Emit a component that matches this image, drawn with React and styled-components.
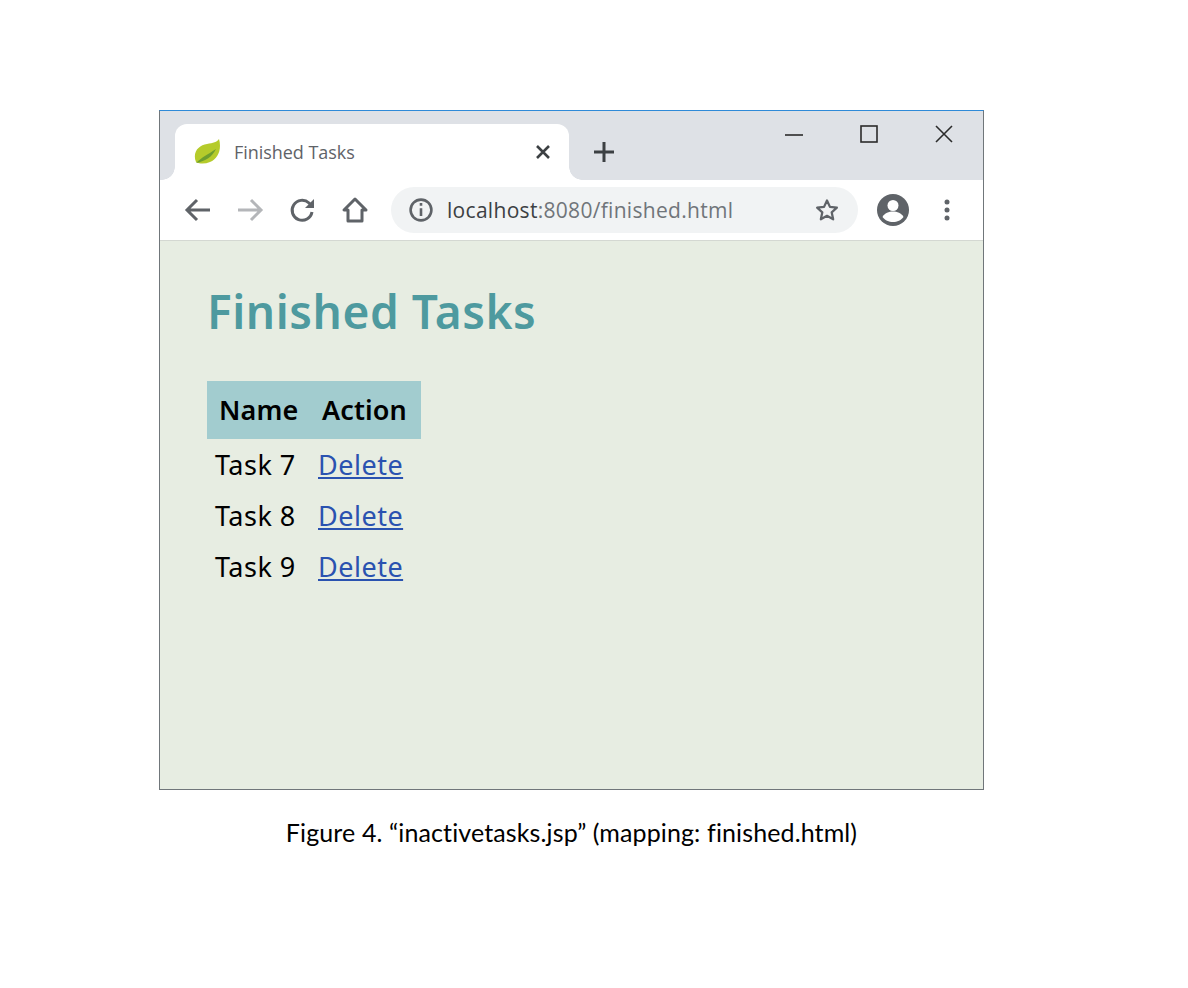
import styled, { createGlobalStyle } from "styled-components";

const tasks = ["Task 7", "Task 8", "Task 9"];

const Global = createGlobalStyle`
  html, body {
    margin: 0;
    padding: 0;
    background: #fff;
  }
`;

const Page = styled.div`
  width: 1188px;
  height: 988px;
  padding: 110px 0 0 159px;
  box-sizing: border-box;
  overflow: hidden;
`;

const Win = styled.div`
  width: 825px;
  height: 680px;
  box-sizing: border-box;
  display: flex;
  flex-direction: column;
  border: 1px solid #70767a;
  border-top-color: #2f8ad8;
  background: #fff;
`;

const TabStrip = styled.div`
  height: 69px;
  flex: none;
  display: flex;
  background: #dee1e6;
  padding: 13px 0 0 15px;
  box-sizing: border-box;
`;

const Tab = styled.div`
  position: relative;
  width: 394px;
  height: 56px;
  display: flex;
  align-items: center;
  background: #fff;
  border-radius: 12px 12px 0 0;
  padding: 0 18px 0 18px;
  box-sizing: border-box;
  &::before,
  &::after {
    content: "";
    position: absolute;
    bottom: 0;
    width: 13px;
    height: 13px;
  }
  &::before {
    left: -13px;
    background: radial-gradient(circle at 0 0, #dee1e6 12.5px, #fff 13px);
  }
  &::after {
    right: -13px;
    background: radial-gradient(circle at 100% 0, #dee1e6 12.5px, #fff 13px);
  }
`;

const TabTitle = styled.span`
  flex: 1;
  margin-left: 13px;
  font: 18px "Open Sans", sans-serif;
  letter-spacing: -0.05px;
  color: #5f6368;
`;

const NewTab = styled.div`
  margin: 16px 0 0 23px;
  width: 24px;
  height: 24px;
`;

const WinControls = styled.div`
  margin-left: auto;
  display: flex;
  align-items: flex-start;
  gap: 55px;
  padding: 0 29px 0 0;
`;

const Toolbar = styled.div`
  height: 61px;
  flex: none;
  display: flex;
  align-items: center;
  border-bottom: 1px solid #d4d8d2;
  box-sizing: border-box;
  padding: 0 24px 1px 23px;
`;

const NavIcon = styled.div`
  width: 30px;
  height: 30px;
  flex: none;
  margin-right: ${(p) => p.$gap || 22}px;
  display: flex;
`;

const Omni = styled.div`
  width: 467px;
  height: 46px;
  flex: none;
  border-radius: 23px;
  background: #f1f3f4;
  display: flex;
  align-items: center;
  padding: 0 18px 0 17px;
  box-sizing: border-box;
  margin-left: -7px;
`;

const Url = styled.div`
  flex: 1;
  margin-left: 13px;
  font: 21px "Open Sans", sans-serif;
  letter-spacing: 0.3px;
  color: #70757a;
  span {
    color: #3c4043;
  }
`;

const TailIcons = styled.div`
  display: flex;
  align-items: center;
  margin-left: 18px;
  gap: 34px;
`;

const Content = styled.div`
  flex: 1;
  background: #e7ede2;
  padding: 41px 0 0 47px;
  box-sizing: border-box;
`;

const Title = styled.h1`
  margin: 0 0 41px;
  font: 600 46px/58px "Noto Sans", sans-serif;
  letter-spacing: 0.55px;
  color: #4e9a9f;
`;

const Table = styled.table`
  border-collapse: collapse;
  table-layout: fixed;
  width: 214px;
  font: 27px "Noto Sans", sans-serif;
  letter-spacing: 0.5px;
  color: #000;
`;

const Head = styled.th`
  width: ${(p) => p.$w}px;
  background: #a2cccf;
  height: 58px;
  padding: 0 0 2px 12px;
  font-weight: 600;
  letter-spacing: 0.1px;
  text-align: left;
  box-sizing: border-box;
`;

const Cell = styled.td`
  height: 51px;
  padding: 0 0 0 8px;
`;

const DeleteLink = styled.a`
  color: #2a52b0;
  text-decoration: underline;
`;

const Caption = styled.div`
  width: 825px;
  margin-top: 24px;
  text-align: center;
  font: 25px/36px "Lato", sans-serif;
  font-variant-ligatures: none;
  letter-spacing: 0.12px;
  color: #000;
`;

const Icon = ({ size = 30, children, fill = "none", stroke = "#5f6368", sw = 3 }) => (
  <svg width={size} height={size} viewBox="0 0 30 30" fill={fill} stroke={stroke} strokeWidth={sw}>
    {children}
  </svg>
);

export default function App() {
  return (
    <Page>
      <Global />
      <Win>
        <TabStrip>
          <Tab>
            <svg width="28" height="26" viewBox="0 0 28 26">
              <path d="M3 23C-1 13 6 6 14 5c6-1 10-2 12-5 3 10-1 20-9 23-5 2-10 2-14 0z" fill="#b5cb2b" />
              <path d="M3 24c6-6 11-8 20-14-4 8-10 12-20 14z" fill="#6d9e2e" />
            </svg>
            <TabTitle>Finished Tasks</TabTitle>
            <svg width="16" height="16" viewBox="0 0 16 16" stroke="#3c4043" strokeWidth="2.6">
              <path d="M2 2l12 12M14 2L2 14" />
            </svg>
          </Tab>
          <NewTab>
            <svg width="24" height="24" viewBox="0 0 24 24" stroke="#3c4043" strokeWidth="3">
              <path d="M12 2v20M2 12h20" />
            </svg>
          </NewTab>
          <WinControls>
            <svg width="20" height="20" viewBox="0 0 20 20" stroke="#2b2b2b" strokeWidth="1.6">
              <path d="M1 11h18" />
            </svg>
            <svg width="20" height="20" viewBox="0 0 20 20" fill="none" stroke="#2b2b2b" strokeWidth="1.6">
              <rect x="2" y="2" width="16" height="16" />
            </svg>
            <svg width="20" height="20" viewBox="0 0 20 20" stroke="#2b2b2b" strokeWidth="1.6">
              <path d="M2 2l16 16M18 2L2 18" />
            </svg>
          </WinControls>
        </TabStrip>
        <Toolbar>
          <NavIcon>
            <Icon>
              <path d="M27 15H5M14 5L4 15l10 10" />
            </Icon>
          </NavIcon>
          <NavIcon $gap={23}>
            <Icon stroke="#b4b6b9">
              <path d="M3 15h22M16 5l10 10-10 10" />
            </Icon>
          </NavIcon>
          <NavIcon>
            <Icon>
              <path d="M24 17a10 10 0 1 1-3-9l3 3" />
              <path d="M26 4v9h-9z" fill="#5f6368" stroke="none" />
            </Icon>
          </NavIcon>
          <NavIcon $gap={28}>
            <Icon>
              <path d="M15 4L4 15h4v11h14V15h4z" strokeLinejoin="round" />
            </Icon>
          </NavIcon>
          <Omni>
            <Icon size={26}>
              <circle cx="15" cy="15" r="12" />
              <path d="M15 13v9M15 7v3" />
            </Icon>
            <Url>
              <span>localhost</span>:8080/finished.html
            </Url>
            <Icon size={26} sw={2.6}>
              <path d="M15 4l3.4 7.4 8 .9-6 5.4 1.7 8L15 21.700 7.900 25.700l1.700-8-6-5.400 8-.9z" strokeLinejoin="round" />
            </Icon>
          </Omni>
          <TailIcons>
            <svg width="34" height="34" viewBox="0 0 34 34">
              <circle cx="17" cy="17" r="16" fill="#5f6368" />
              <circle cx="17" cy="12.500" r="5.500" fill="#fff" />
              <path d="M6.500 24c2-4 6.500-5.500 10.500-5.500S25.500 20 27.500 24c-2 3-6.500 5-10.500 5S8.500 27 6.500 24z" fill="#fff" />
            </svg>
            <svg width="6" height="22" viewBox="0 0 6 22" fill="#5f6368">
              <circle cx="3" cy="3" r="2.500" />
              <circle cx="3" cy="11" r="2.500" />
              <circle cx="3" cy="19" r="2.500" />
            </svg>
          </TailIcons>
        </Toolbar>
        <Content>
          <Title>Finished Tasks</Title>
          <Table>
            <thead>
              <tr>
                <Head $w={103}>Name</Head>
                <Head $w={111}>Action</Head>
              </tr>
            </thead>
            <tbody>
              {tasks.map((t) => (
                <tr key={t}>
                  <Cell>{t}</Cell>
                  <Cell>
                    <DeleteLink href="#">Delete</DeleteLink>
                  </Cell>
                </tr>
              ))}
            </tbody>
          </Table>
        </Content>
      </Win>
      <Caption>Figure 4. “inactivetasks.jsp” (mapping: finished.html)</Caption>
    </Page>
  );
}
